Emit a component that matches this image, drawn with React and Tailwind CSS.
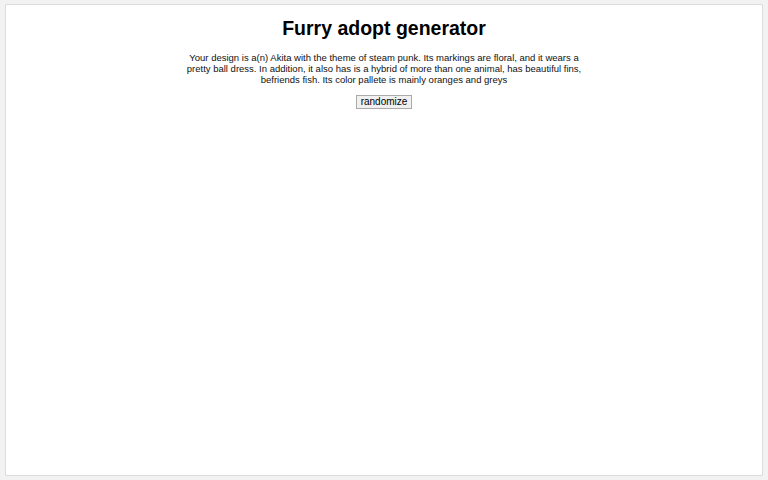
import React, { useState } from 'react';

const description =
    'Your design is a(n) Akita with the theme of steam punk. Its markings are floral, and it wears a pretty ball dress. In addition, it also has is a hybrid of more than one animal, has beautiful fins, befriends fish. Its color pallete is mainly oranges and greys';

const App = () => {
    const [text] = useState(description);

    return (
        <div className="w-[768px] h-[480px] bg-[#f2f2f2] p-[4px_5px_4px_5px] font-['Liberation_Sans',Arial,sans-serif]">
            <div className="h-full bg-white border border-[#dcdcdc] flex flex-col items-center">
                <h1 className="mt-[10px] text-[19.5px] leading-[26px] font-bold text-black">
                    Furry adopt generator
                </h1>
                <p className="mt-[11px] w-[400px] text-center text-[9.5px] leading-[11px] text-[#111]">
                    {text}
                </p>
                <button className="mt-[10px] px-[4px] h-[14px] text-[10px] leading-[12px] text-black bg-[#f0f0f0] border border-[#aaa]">
                    randomize
                </button>
            </div>
        </div>
    );
};

export default App;
